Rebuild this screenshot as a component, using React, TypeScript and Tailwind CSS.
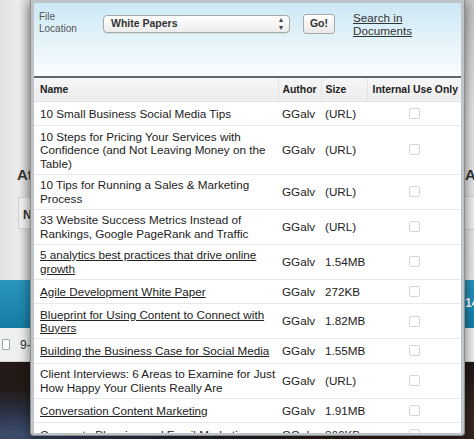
import React from "react";

type Doc = {
  lines: string[];
  link: boolean;
  size: string;
};

const DOCS: Doc[] = [
  { lines: ["10 Small Business Social Media Tips"], link: false, size: "(URL)" },
  {
    lines: [
      "10 Steps for Pricing Your Services with",
      "Confidence (and Not Leaving Money on the",
      "Table)",
    ],
    link: false,
    size: "(URL)",
  },
  { lines: ["10 Tips for Running a Sales & Marketing", "Process"], link: false, size: "(URL)" },
  {
    lines: ["33 Website Success Metrics Instead of", "Rankings, Google PageRank and Traffic"],
    link: false,
    size: "(URL)",
  },
  { lines: ["5 analytics best practices that drive online", "growth"], link: true, size: "1.54MB" },
  { lines: ["Agile Development White Paper"], link: true, size: "272KB" },
  { lines: ["Blueprint for Using Content to Connect with", "Buyers"], link: true, size: "1.82MB" },
  { lines: ["Building the Business Case for Social Media"], link: true, size: "1.55MB" },
  {
    lines: ["Client Interviews: 6 Areas to Examine for Just", "How Happy Your Clients Really Are"],
    link: false,
    size: "(URL)",
  },
  { lines: ["Conversation Content Marketing"], link: true, size: "1.91MB" },
  { lines: ["Corporate Blogging and Email Marketing"], link: true, size: "366KB" },
];

function BackgroundPage() {
  return (
    <div className="flex flex-col h-[439px] w-[474px]">
      {/* light page area */}
      <div className="h-[280px] bg-[linear-gradient(to_right,#e2e2e2_0px,#ececec_18px,#d4d4d4_30px)] relative">
        <div className="absolute right-0 top-0 h-full w-[11px] bg-[linear-gradient(to_bottom,#c4c4c4,#e4e4e4_40%,#e8e8e8)]" />
        {/* left column peeking out from behind the dialog */}
        <div className="absolute left-0 top-0 w-[31px] h-full overflow-hidden">
          <div className="absolute left-[17px] top-[164px] whitespace-nowrap text-[15px] font-bold text-[#333]">
            Attachments
          </div>
          <div className="absolute left-[18px] top-[197px] w-[60px] h-[32px] border border-[#d2d2d2] bg-[#f1f1f1] pl-[4px] pt-[8px] text-[12px] font-bold text-[#333]">
            Name
          </div>
        </div>
        {/* right column peeking out */}
        <div className="absolute right-0 top-0 w-[10px] h-full overflow-hidden">
          <div className="absolute left-[1px] top-[164px] whitespace-nowrap text-[15px] font-bold text-[#333]">
            Activity
          </div>
          <div className="absolute left-0 top-[196px] w-[20px] h-[34px] border border-[#d2d2d2] bg-[#efefef]" />
        </div>
      </div>
      {/* blue band */}
      <div className="h-[48px] bg-[linear-gradient(to_bottom,#2a95bd,#157ea6)] relative">
        <div className="absolute right-0 top-0 w-[10px] h-full overflow-hidden">
          <span className="absolute left-[1px] top-[14px] text-[12px] font-bold text-white whitespace-nowrap">
            14
          </span>
        </div>
      </div>
      {/* toolbar strip */}
      <div className="h-[34px] bg-[#eef0f0] border-b border-[#cfd3d3] flex items-center gap-[10px] pl-[2px]">
        <div className="w-[8px] h-[11px] bg-white border border-[#9aa] rounded-[1px]" />
        <span className="text-[12px] text-[#333]">9-</span>
      </div>
      {/* dark photo */}
      <div className="flex-1 bg-[radial-gradient(ellipse_at_5%_95%,#3d4e70_0%,#2a2f40_25%,transparent_45%),radial-gradient(ellipse_at_90%_80%,#3a2a22_0%,#231a17_60%)]" />
    </div>
  );
}

function DocRow({ doc }: { doc: Doc }) {
  return (
    <tr className="h-[24.5px] border-b border-[#e8e8e8]">
      <td className="pl-[6px] pr-[2px] py-[3.5px] align-middle">
        {doc.lines.map((line, i) => (
          <div
            key={i}
            className={`whitespace-nowrap ${doc.link ? "underline underline-offset-[1px]" : ""}`}
          >
            {line}
          </div>
        ))}
      </td>
      <td className="pl-[4px] align-middle">GGalv</td>
      <td className="pl-[4px] align-middle">{doc.size}</td>
      <td className="align-middle">
        <div className="mx-auto w-[11px] h-[11px] border border-[#d6d6d6] rounded-[2px] bg-white" />
      </td>
    </tr>
  );
}

function Modal() {
  return (
    <div className="absolute left-[30px] top-0 w-[435px] h-[436px] bg-[#bfc4c8] border-x border-b border-[#8d8d8d] rounded-b-[4px] px-[3px] pt-[3px] pb-[2px] shadow-[0_3px_12px_rgba(0,0,0,0.55)] flex flex-col overflow-hidden">
      {/* search header */}
      <div className="h-[75px] bg-[linear-gradient(to_bottom,#cbe8f5,#e6f4fa_55%,#fafdfe)] border-b-[2px] border-[#5d6774] flex items-start pt-[8px] pl-[5px]">
        <div className="w-[64px] text-[10px] leading-[12px] text-[#555]">
          <div>File</div>
          <div>Location</div>
        </div>
        <div className="mt-[4px] w-[187px] h-[18px] rounded-[4px] border border-[#a8a8a8] bg-[linear-gradient(to_bottom,#ffffff,#ececec)] flex items-center justify-between pl-[7px] pr-[6px] shadow-[0_1px_1px_rgba(0,0,0,0.08)]">
          <span className="text-[10.5px] font-bold text-[#333]">White Papers</span>
          <span className="text-[8px] leading-[8px] text-[#444] flex flex-col items-center">
            <span>▴</span>
            <span>▾</span>
          </span>
        </div>
        <button className="ml-[13px] mt-[3px] w-[32px] h-[20px] rounded-[3px] border border-[#a9a9a9] bg-[linear-gradient(to_bottom,#ffffff,#e9e9e9)] text-[10.5px] font-bold text-[#333]">
          Go!
        </button>
        <div className="ml-[18px] text-[11.7px] leading-[13px] text-[#333] underline underline-offset-[1px]">
          <div>Search in</div>
          <div>Documents</div>
        </div>
      </div>
      {/* results */}
      <div className="flex-1 bg-white overflow-hidden">
        <table className="w-full border-collapse table-fixed text-[11.7px] leading-[13.5px] text-[#222]">
          <colgroup>
            <col className="w-[244px]" />
            <col className="w-[43px]" />
            <col className="w-[46px]" />
            <col />
          </colgroup>
          <thead>
            <tr className="h-[23px] bg-[linear-gradient(to_bottom,#f6f6f6,#ededed)] border-b border-[#dcdcdc] text-[10.4px] font-bold text-[#222]">
              <th className="text-left pl-[6px] border-r border-[#e2e2e2]">Name</th>
              <th className="text-left pl-[4px] border-r border-[#e2e2e2]">Author</th>
              <th className="text-left pl-[4px] border-r border-[#e2e2e2]">Size</th>
              <th className="text-left pl-[5px] whitespace-nowrap">Internal Use Only</th>
            </tr>
          </thead>
          <tbody>
            {DOCS.map((doc, i) => (
              <DocRow key={i} doc={doc} />
            ))}
          </tbody>
        </table>
      </div>
    </div>
  );
}

export default function App() {
  return (
    <div
      className="relative w-[474px] h-[439px] overflow-hidden"
      style={{ fontFamily: '"Liberation Sans", Arial, sans-serif' }}
    >
      <BackgroundPage />
      <Modal />
    </div>
  );
}
